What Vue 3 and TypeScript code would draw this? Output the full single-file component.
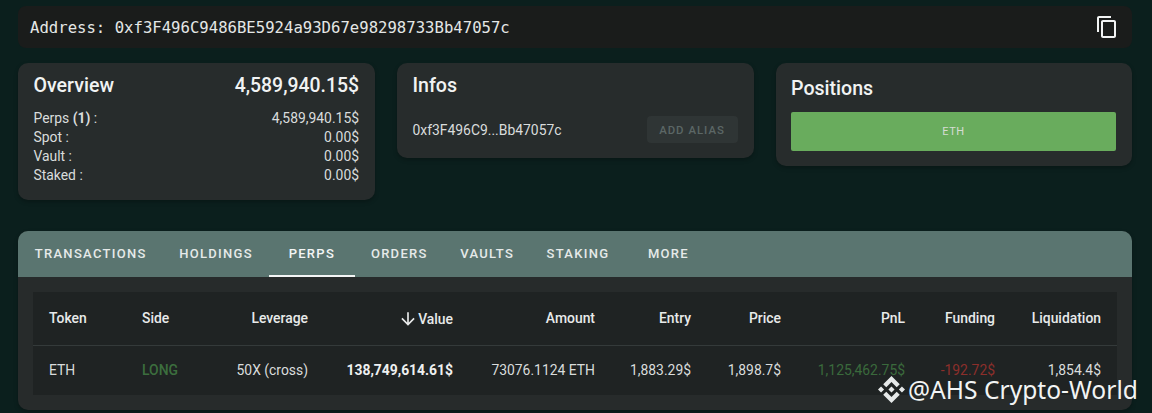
<script setup lang="ts">
const tabs = ['Transactions', 'Holdings', 'Perps', 'Orders', 'Vaults', 'Staking', 'More']
const balances = [
  { label: 'Spot', value: '0.00$' },
  { label: 'Vault', value: '0.00$' },
  { label: 'Staked', value: '0.00$' },
]
</script>

<template>
  <main class="page">
    <header class="address-bar">
      <span class="address">Address: 0xf3F496C9486BE5924a93D67e98298733Bb47057c</span>
      <svg class="copy-icon" viewBox="0 0 24 24" aria-hidden="true">
        <path d="M16 1H4c-1.1 0-2 .9-2 2v14h2V3h12V1zm3 4H8c-1.1 0-2 .9-2 2v14c0 1.1.9 2 2 2h11c1.1 0 2-.9 2-2V7c0-1.1-.9-2-2-2zm0 16H8V7h11v14z" />
      </svg>
    </header>

    <section class="cards">
      <div class="card overview">
        <div class="overview-head">
          <h2>Overview</h2>
          <span class="total">4,589,940.15$</span>
        </div>
        <div class="balance">
          <span>Perps <b>(1)</b> :</span>
          <span>4,589,940.15$</span>
        </div>
        <div v-for="b in balances" :key="b.label" class="balance">
          <span>{{ b.label }} :</span>
          <span>{{ b.value }}</span>
        </div>
      </div>

      <div class="card infos">
        <h2>Infos</h2>
        <div class="infos-row">
          <span>0xf3F496C9...Bb47057c</span>
          <button type="button" class="alias-btn">Add alias</button>
        </div>
      </div>

      <div class="card positions">
        <h2>Positions</h2>
        <button type="button" class="eth-btn">ETH</button>
      </div>
    </section>

    <section class="panel">
      <nav class="tabs">
        <button
          v-for="tab in tabs"
          :key="tab"
          type="button"
          class="tab"
          :class="{ active: tab === 'Perps' }"
        >{{ tab }}</button>
      </nav>
      <div class="table-wrap">
        <table>
          <thead>
            <tr>
              <th class="left">Token</th>
              <th class="left">Side</th>
              <th>Leverage</th>
              <th>
                <svg class="sort-icon" viewBox="0 0 24 24" aria-hidden="true">
                  <path d="M20 12l-1.41-1.41L13 16.17V4h-2v12.17l-5.58-5.59L4 12l8 8 8-8z" />
                </svg>
                Value
              </th>
              <th>Amount</th>
              <th>Entry</th>
              <th>Price</th>
              <th>PnL</th>
              <th>Funding</th>
              <th>Liquidation</th>
            </tr>
          </thead>
          <tbody>
            <tr>
              <td class="left">ETH</td>
              <td class="left long">LONG</td>
              <td>50X (cross)</td>
              <td class="strong">138,749,614.61$</td>
              <td>73076.1124 ETH</td>
              <td>1,883.29$</td>
              <td>1,898.7$</td>
              <td class="gain">1,125,462.75$</td>
              <td class="loss">-192.72$</td>
              <td>1,854.4$</td>
            </tr>
          </tbody>
        </table>
      </div>
    </section>

    <div class="watermark">
      <svg viewBox="0 0 24 24" aria-hidden="true">
        <path d="M16.624 13.9202l2.7175 2.7154-7.353 7.353-7.353-7.352 2.7175-2.7164 4.6355 4.6595 4.6356-4.6595zm4.6366-4.6366L24 12l-2.7154 2.7164L18.5682 12l2.6924-2.7164zm-9.272.001l2.7163 2.6914-2.7164 2.7174v-.001L9.2721 12l2.7164-2.7154zm-9.2722-.001L5.4088 12l-2.6914 2.6924L0 12l2.7164-2.7164zM11.9885.0115l7.353 7.329-2.7174 2.7154-4.6356-4.6356-4.6355 4.6595-2.7174-2.7154 7.353-7.353z" />
      </svg>
      <span>@AHS Crypto-World</span>
    </div>
  </main>
</template>

<style>
html,
body {
  margin: 0;
  background: #0b1f1d;
}
</style>

<style scoped>
.page {
  position: relative;
  box-sizing: border-box;
  width: 1152px;
  height: 413px;
  padding: 6px 20px 0 18px;
  overflow: hidden;
  background: #0b1f1d;
  color: #e8eaea;
  font-family: Roboto, "Liberation Sans", sans-serif;
}

.address-bar {
  display: flex;
  align-items: center;
  justify-content: space-between;
  box-sizing: border-box;
  height: 42px;
  padding: 0 13px 0 12px;
  border-radius: 8px;
  background: #1a1c1b;
}

.address {
  font-family: "DejaVu Sans Mono", monospace;
  font-size: 15.63px;
  color: #e4e7e6;
}

.copy-icon {
  width: 24px;
  height: 24px;
  fill: #f2f4f4;
}

.cards {
  display: grid;
  grid-template-columns: 357px 356.5px 356.5px;
  column-gap: 22px;
  align-items: start;
  margin-top: 15px;
}

.card {
  box-sizing: border-box;
  padding: 0 16px 0 15.5px;
  border-radius: 10px;
  background: #272c2c;
  box-shadow: 0 2px 4px rgba(0, 0, 0, 0.25);
}

h2 {
  margin: 0;
  font-size: 19.6px;
  font-weight: 500;
  line-height: 24px;
  color: #f1f3f3;
}

.overview {
  height: 137px;
  padding-top: 11px;
}

.overview-head {
  display: flex;
  justify-content: space-between;
  margin-bottom: 11px;
}

.total {
  font-size: 19.4px;
  font-weight: 500;
  line-height: 24px;
  color: #f1f3f3;
}

.balance {
  display: flex;
  justify-content: space-between;
  font-size: 13.9px;
  line-height: 19px;
  color: #d9dcdc;
}

.balance b {
  font-weight: 700;
}

.infos {
  height: 95px;
  padding-top: 11px;
}

.infos-row {
  display: flex;
  align-items: center;
  justify-content: space-between;
  margin-top: 18px;
  font-size: 13.9px;
  color: #d9dcdc;
}

.alias-btn {
  width: 91px;
  height: 27px;
  border: 0;
  border-radius: 4px;
  background: #2f3535;
  color: #5c6766;
  font-family: inherit;
  font-size: 11.4px;
  font-weight: 500;
  letter-spacing: 1px;
  text-transform: uppercase;
}

.positions {
  height: 103px;
  padding-top: 14px;
}

.eth-btn {
  display: block;
  width: 100%;
  height: 39px;
  margin-top: 11px;
  border: 0;
  border-radius: 2px;
  background: #69ac5d;
  color: #d5dcd4;
  font-family: inherit;
  font-size: 11px;
  letter-spacing: 0.5px;
}

.panel {
  box-sizing: border-box;
  height: 179px;
  margin-top: 31px;
  padding-bottom: 15px;
  border-radius: 10px;
  background: #272b2b;
  box-shadow: 0 2px 4px rgba(0, 0, 0, 0.25);
  overflow: hidden;
}

.tabs {
  display: flex;
  height: 46px;
  padding-left: 0.5px;
  background: #5a7570;
}

.tab {
  box-sizing: border-box;
  min-width: 85.5px;
  padding: 0 16.25px;
  border: 0;
  border-bottom: 2px solid transparent;
  background: transparent;
  color: #e6eae9;
  font-family: inherit;
  font-size: 13px;
  font-weight: 500;
  letter-spacing: 1.3px;
  text-transform: uppercase;
}

.tab.active {
  border-bottom-color: #f3f5f5;
  color: #f3f5f5;
}

.table-wrap {
  margin: 15px 15px 0;
  background: #1f2323;
}

table {
  width: 100%;
  border-collapse: collapse;
  table-layout: fixed;
  font-size: 13.9px;
}

th:nth-child(1) { width: 93px; }
th:nth-child(2) { width: 94px; }
th:nth-child(3) { width: 104px; }
th:nth-child(4) { width: 145px; }
th:nth-child(5) { width: 142px; }
th:nth-child(6) { width: 96px; }
th:nth-child(7) { width: 90px; }
th:nth-child(8) { width: 124px; }
th:nth-child(9) { width: 90px; }

th,
td {
  box-sizing: border-box;
  padding: 0 16px;
  text-align: right;
  white-space: nowrap;
}

th {
  height: 53px;
  border-bottom: 1px solid #343a3a;
  font-weight: 500;
  color: #e8eaea;
}

td {
  height: 50px;
  color: #d9dcdc;
}

th.left,
td.left {
  text-align: left;
}

.sort-icon {
  width: 20px;
  height: 20px;
  margin-right: -3px;
  margin-bottom: -5px;
  fill: #e8eaea;
}

td.strong {
  font-weight: 700;
  color: #eef0f0;
}

td.long {
  font-weight: 500;
  color: #3c6f3e;
}

td.gain {
  color: #3a6a3c;
}

td.loss {
  color: #8c2f2b;
}

.watermark {
  position: absolute;
  left: 878px;
  top: 373px;
  display: flex;
  align-items: center;
  gap: 3px;
  font-family: "Noto Sans", sans-serif;
  font-size: 24.6px;
  line-height: 33px;
  color: #f2f4f4;
}

.watermark svg {
  width: 27px;
  height: 27px;
  fill: #e6e9e9;
}
</style>
